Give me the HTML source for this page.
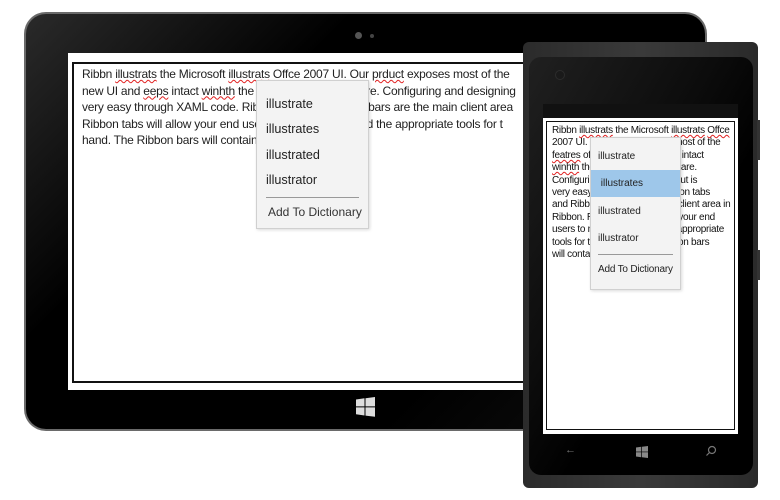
<!DOCTYPE html>
<html><head><style>
*{margin:0;padding:0;box-sizing:border-box}
body{width:780px;height:500px;background:#fff;position:relative;overflow:hidden;font-family:"Liberation Sans",sans-serif}
.a{position:absolute}
.sp{text-decoration:underline wavy #e02020;text-decoration-thickness:1px;text-underline-offset:1px}
.tt{font-size:12px;letter-spacing:-0.25px;line-height:16.6px;color:#222;white-space:nowrap}
.pt{font-size:10px;letter-spacing:-0.3px;line-height:12.4px;color:#111;white-space:nowrap}
.menu{background:#f3f3f3;border:1px solid #d0d0d0;box-shadow:1px 1px 3px rgba(0,0,0,.15)}
</style></head><body>
<!-- tablet -->
<div class="a" style="left:24px;top:12px;width:683px;height:419px;border-radius:22px;background:#6a6a6a"></div>
<div class="a" style="left:26px;top:14px;width:679px;height:415px;border-radius:20px;background:linear-gradient(135deg,#2a2a2a,#000 30%,#000 70%,#111)"></div>
<div class="a" style="left:355px;top:32px;width:7px;height:7px;border-radius:50%;background:#555"></div>
<div class="a" style="left:370px;top:34px;width:4px;height:4px;border-radius:50%;background:#444"></div>
<div class="a" style="left:68px;top:53px;width:630px;height:337px;background:#fff"></div>
<div class="a" style="left:72px;top:62px;width:620px;height:321px;border:2px solid #111"></div>
<div class="a tt" style="left:82px;top:66px">Ribbn <span class="sp">illustrats</span> the Microsoft <span class="sp">illustrats</span> Offce 2007 UI. Our <span class="sp">prduct</span> exposes most of the<br>new UI and <span class="sp">eeps</span> intact <span class="sp">winhth</span> the features of the software. Configuring and designing<br>very easy through XAML code. Ribbon tabs and Ribbon bars are the main client area<br>Ribbon tabs will allow your end users to navigate and find the appropriate tools for t<br>hand. The Ribbon bars will contain</div>
<div class="a menu" style="left:256px;top:80px;width:113px;height:149px"></div>
<div class="a" style="left:266px;top:92px;font-size:12.6px;color:#222;line-height:25.3px">illustrate<br>illustrates<br>illustrated<br>illustrator</div>
<div class="a" style="left:266px;top:197px;width:93px;height:1px;background:#999"></div>
<div class="a" style="left:268px;top:205px;font-size:12px;color:#333">Add To Dictionary</div>
<svg class="a" style="left:356px;top:397px" width="20" height="20"><path d="M0 2.5L8.5 1.3V9.4H0ZM9.5 1.2L19 0V9.4H9.5ZM0 10.4H8.5V18.5L0 17.3ZM9.5 10.4H19V19.8L9.5 18.6Z" fill="#ddd"/></svg>
<!-- phone -->
<div class="a" style="left:523px;top:42px;width:235px;height:446px;border-radius:6px;background:linear-gradient(90deg,#2b2b2b,#3a3a3a 50%,#2a2a2a)"></div>
<div class="a" style="left:757px;top:120px;width:3px;height:40px;background:#333"></div>
<div class="a" style="left:757px;top:250px;width:3px;height:30px;background:#333"></div>
<div class="a" style="left:529px;top:57px;width:224px;height:418px;border-radius:12px;background:linear-gradient(120deg,#202020,#0c0c0c 40%,#000 60%)"></div>
<div class="a" style="left:555px;top:70px;width:10px;height:10px;border-radius:50%;background:#1a1a1a;border:1px solid #2c2c2c"></div>
<div class="a" style="left:543px;top:104px;width:195px;height:14px;background:#111"></div>
<div class="a" style="left:543px;top:118px;width:195px;height:316px;background:#fff"></div>
<div class="a" style="left:546px;top:121px;width:189px;height:309px;border:1.5px solid #111"></div>
<div class="a pt" style="left:552px;top:125px;width:180px;overflow:hidden">Ribbn <span class="sp">illustrats</span> the Microsoft <span class="sp">illustrats</span> <span class="sp">Offce</span><br>2007 UI. Our prduct exposes most of the<br><span class="sp">featres</span> of the new UI and eeps intact<br><span class="sp">winhth</span> the features of the software.<br>Configuring and designing layout is<br>very easy through XAML. Ribbon tabs<br>and Ribbon bars are the main client area in<br>Ribbon. Ribbon tabs will allow your end<br>users to navigate and find the appropriate<br>tools for the task at hand. Ribbon bars<br>will contain</div>
<div class="a menu" style="left:590px;top:137px;width:91px;height:153px"></div>
<div class="a" style="left:591px;top:170px;width:89px;height:27px;background:#9ec7ea"></div>
<div class="a" style="left:598px;top:143px;font-size:10px;color:#222;line-height:27.3px">illustrate<br>&nbsp;illustrates<br>illustrated<br>illustrator</div>
<div class="a" style="left:598px;top:254px;width:75px;height:1px;background:#999"></div>
<div class="a" style="left:598px;top:264px;font-size:10px;letter-spacing:-0.2px;color:#222">Add To Dictionary</div>
<div class="a" style="left:565px;top:444px;color:#777;font-size:11px">&#8592;</div>
<svg class="a" style="left:636px;top:446px" width="12" height="12"><path d="M0 1.5L5.3 .8V5.6H0ZM6 .7L12 0V5.6H6ZM0 6.3H5.3V11.2L0 10.5ZM6 6.3H12V12L6 11.3Z" fill="#888"/></svg>
<svg class="a" style="left:705px;top:445px" width="12" height="12"><circle cx="7" cy="5" r="3.5" fill="none" stroke="#777" stroke-width="1.2"/><path d="M4.5 7.5L1.5 10.5" stroke="#777" stroke-width="1.2"/></svg>
</body></html>
